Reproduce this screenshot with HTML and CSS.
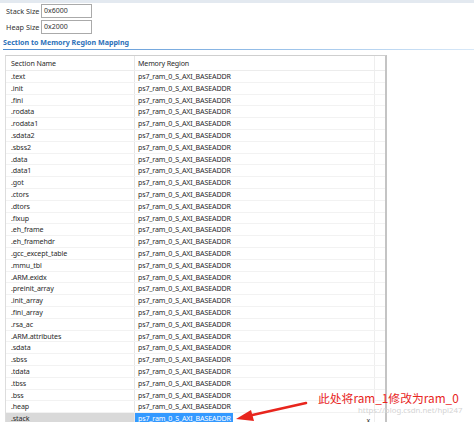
FILE: index.html
```html
<!DOCTYPE html>
<html>
<head>
<meta charset="utf-8">
<link rel="stylesheet" href="styles.css">
</head>
<body>
<div class="page">
  <div class="topband"></div>
  <div class="field"><span class="flabel">Stack Size</span><span class="finput">0x6000</span></div>
  <div class="field"><span class="flabel">Heap Size</span><span class="finput">0x2000</span></div>
  <div class="title">Section to Memory Region Mapping</div>
  <div class="rule"></div>
  <div class="table">
    <div class="row head"><span class="c1">Section Name</span><span class="c2">Memory Region</span><span class="c3"></span></div>
    <div class="row"><span class="c1">.text</span><span class="c2">ps7_ram_0_S_AXI_BASEADDR</span><span class="c3"></span></div>
    <div class="row"><span class="c1">.init</span><span class="c2">ps7_ram_0_S_AXI_BASEADDR</span><span class="c3"></span></div>
    <div class="row"><span class="c1">.fini</span><span class="c2">ps7_ram_0_S_AXI_BASEADDR</span><span class="c3"></span></div>
    <div class="row"><span class="c1">.rodata</span><span class="c2">ps7_ram_0_S_AXI_BASEADDR</span><span class="c3"></span></div>
    <div class="row"><span class="c1">.rodata1</span><span class="c2">ps7_ram_0_S_AXI_BASEADDR</span><span class="c3"></span></div>
    <div class="row"><span class="c1">.sdata2</span><span class="c2">ps7_ram_0_S_AXI_BASEADDR</span><span class="c3"></span></div>
    <div class="row"><span class="c1">.sbss2</span><span class="c2">ps7_ram_0_S_AXI_BASEADDR</span><span class="c3"></span></div>
    <div class="row"><span class="c1">.data</span><span class="c2">ps7_ram_0_S_AXI_BASEADDR</span><span class="c3"></span></div>
    <div class="row"><span class="c1">.data1</span><span class="c2">ps7_ram_0_S_AXI_BASEADDR</span><span class="c3"></span></div>
    <div class="row"><span class="c1">.got</span><span class="c2">ps7_ram_0_S_AXI_BASEADDR</span><span class="c3"></span></div>
    <div class="row"><span class="c1">.ctors</span><span class="c2">ps7_ram_0_S_AXI_BASEADDR</span><span class="c3"></span></div>
    <div class="row"><span class="c1">.dtors</span><span class="c2">ps7_ram_0_S_AXI_BASEADDR</span><span class="c3"></span></div>
    <div class="row"><span class="c1">.fixup</span><span class="c2">ps7_ram_0_S_AXI_BASEADDR</span><span class="c3"></span></div>
    <div class="row"><span class="c1">.eh_frame</span><span class="c2">ps7_ram_0_S_AXI_BASEADDR</span><span class="c3"></span></div>
    <div class="row"><span class="c1">.eh_framehdr</span><span class="c2">ps7_ram_0_S_AXI_BASEADDR</span><span class="c3"></span></div>
    <div class="row"><span class="c1">.gcc_except_table</span><span class="c2">ps7_ram_0_S_AXI_BASEADDR</span><span class="c3"></span></div>
    <div class="row"><span class="c1">.mmu_tbl</span><span class="c2">ps7_ram_0_S_AXI_BASEADDR</span><span class="c3"></span></div>
    <div class="row"><span class="c1">.ARM.exidx</span><span class="c2">ps7_ram_0_S_AXI_BASEADDR</span><span class="c3"></span></div>
    <div class="row"><span class="c1">.preinit_array</span><span class="c2">ps7_ram_0_S_AXI_BASEADDR</span><span class="c3"></span></div>
    <div class="row"><span class="c1">.init_array</span><span class="c2">ps7_ram_0_S_AXI_BASEADDR</span><span class="c3"></span></div>
    <div class="row"><span class="c1">.fini_array</span><span class="c2">ps7_ram_0_S_AXI_BASEADDR</span><span class="c3"></span></div>
    <div class="row"><span class="c1">.rsa_ac</span><span class="c2">ps7_ram_0_S_AXI_BASEADDR</span><span class="c3"></span></div>
    <div class="row"><span class="c1">.ARM.attributes</span><span class="c2">ps7_ram_0_S_AXI_BASEADDR</span><span class="c3"></span></div>
    <div class="row"><span class="c1">.sdata</span><span class="c2">ps7_ram_0_S_AXI_BASEADDR</span><span class="c3"></span></div>
    <div class="row"><span class="c1">.sbss</span><span class="c2">ps7_ram_0_S_AXI_BASEADDR</span><span class="c3"></span></div>
    <div class="row"><span class="c1">.tdata</span><span class="c2">ps7_ram_0_S_AXI_BASEADDR</span><span class="c3"></span></div>
    <div class="row"><span class="c1">.tbss</span><span class="c2">ps7_ram_0_S_AXI_BASEADDR</span><span class="c3"></span></div>
    <div class="row"><span class="c1">.bss</span><span class="c2">ps7_ram_0_S_AXI_BASEADDR</span><span class="c3"></span></div>
    <div class="row"><span class="c1">.heap</span><span class="c2">ps7_ram_0_S_AXI_BASEADDR</span><span class="c3"></span></div>
    <div class="row sel"><span class="c1">.stack</span><span class="c2"><span class="hl">ps7_ram_0_S_AXI_BASEADDR</span><span class="drop">x</span></span><span class="c3"></span></div>
  </div>
  <div class="note">此处将ram_1修改为ram_0</div>
  <div class="watermark">https://blog.csdn.net/hpl247</div>
  <svg class="arrow" width="474" height="422" viewBox="0 0 474 422">
    <line x1="306" y1="403" x2="248" y2="416" stroke="#e8251d" stroke-width="2.6" stroke-linecap="round"/>
    <polygon points="236,419 251,410 254,421" fill="#e8251d"/>
  </svg>
</div>
</body>
</html>
```
FILE: styles.css
```css
html, body {
  margin: 0;
  padding: 0;
  background: #ffffff;
}
.page {
  position: relative;
  width: 474px;
  height: 422px;
  overflow: hidden;
  font-family: "Noto Sans", "Open Sans", sans-serif;
  font-size: 7.1px;
  color: #2a2a2a;
}
.topband {
  height: 3px;
  background: #e3e9f0;
}
.field {
  display: flex;
  align-items: center;
  height: 14px;
  margin-top: 1px;
  padding-left: 6px;
}
.field + .field {
  margin-top: 2px;
}
.flabel {
  width: 35px;
  color: #333333;
  font-size: 7.3px;
}
.finput {
  box-sizing: border-box;
  width: 51px;
  height: 14px;
  border: 1px solid #aaaaaa;
  padding-left: 2px;
  line-height: 12px;
  font-size: 7px;
  color: #333333;
}
.title {
  margin-top: 3px;
  padding-left: 3px;
  font-weight: bold;
  font-size: 7.1px;
  color: #2b70b8;
  line-height: 10px;
}
.rule {
  height: 1px;
  margin: 2px 0 0 3px;
  background: linear-gradient(to right, #4a8ad0, #9cc3ea 60%, #d9e9f8);
}
.table {
  margin: 5px 0 0 5px;
  width: 382px;
  border-top: 1px solid #cfcfcf;
  border-left: 1px solid #dddddd;
  border-right: 2px solid #c4c4c4;
  box-sizing: border-box;
}
.row {
  display: flex;
  height: 11.8px;
  line-height: 11.8px;
  border-bottom: 1px solid #f2f2f2;
  box-sizing: border-box;
}
.row.head {
  height: 15px;
  line-height: 14px;
  border-bottom: 1px solid #ececec;
}
.c1 {
  width: 129px;
  padding-left: 5px;
  box-sizing: border-box;
  border-right: 1px solid #e6e6e6;
  white-space: nowrap;
  letter-spacing: -0.1px;
}
.c2 {
  position: relative;
  width: 240px;
  padding-left: 3px;
  box-sizing: border-box;
  border-right: 1px solid #eeeeee;
  white-space: nowrap;
  letter-spacing: -0.15px;
}
.c3 {
  flex: 1;
}
.sel .c1 {
  background: #d9d9d9;
}
.hl {
  display: inline-block;
  margin-left: -3px;
  padding: 0 2px 0 3px;
  background: #3399ff;
  color: #ffffff;
}
.drop {
  position: absolute;
  right: 4px;
  top: 3px;
  font-size: 7px;
  line-height: 10px;
  color: #333333;
}
.note {
  position: absolute;
  left: 318px;
  top: 390px;
  font-family: "Noto Sans CJK SC", "Noto Sans", sans-serif;
  font-size: 11.8px;
  line-height: 16px;
  color: #e8251d;
  white-space: nowrap;
}
.watermark {
  position: absolute;
  left: 358px;
  top: 405px;
  font-size: 7.8px;
  line-height: 10px;
  color: #d4d4d4;
  white-space: nowrap;
}
.arrow {
  position: absolute;
  left: 0;
  top: 0;
}
```
